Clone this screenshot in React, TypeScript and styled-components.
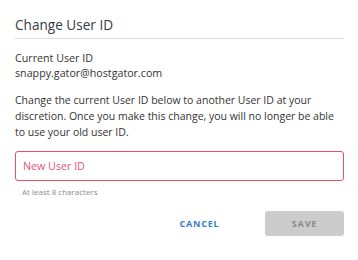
import React from "react";
import styled, { createGlobalStyle } from "styled-components";

const Global = createGlobalStyle`
  html, body { margin: 0; padding: 0; background: #ffffff; }
  body { font-family: "Open Sans", "Liberation Sans", sans-serif; color: #333333; }
  * { box-sizing: border-box; }
`;

const Dialog = styled.div`
  width: 358px;
  height: 260px;
  background: #ffffff;
  padding: 15px 14px 0 15px;
  display: flex;
  flex-direction: column;
`;

const Header = styled.div`
  padding-bottom: 3px;
  border-bottom: 1px solid #dddddd;
`;

const Title = styled.h2`
  margin: 0;
  font-size: 13.6px;
  line-height: 20px;
  font-weight: 400;
  color: #333a44;
`;

const Body = styled.div`
  padding-top: 12px;
  display: flex;
  flex-direction: column;
`;

const InfoLine = styled.div`
  font-size: 10.7px;
  line-height: 15px;
  color: #333333;
`;

const Paragraph = styled.p`
  margin: 11px 0 0 0;
  font-size: 10.5px;
  line-height: 16px;
  color: #333333;
`;

const Input = styled.input`
  margin-top: 11px;
  width: 100%;
  height: 30px;
  border: 1px solid #e8505b;
  border-radius: 3px;
  padding: 0 7px;
  font-family: "Open Sans", "Liberation Sans", sans-serif;
  font-size: 10.7px;
  color: #333333;
  outline: none;
  &::placeholder { color: #e2547a; opacity: 1; }
`;

const Helper = styled.div`
  margin-top: 5px;
  padding-left: 7px;
  font-size: 8px;
  line-height: 12px;
  color: #8a8a8a;
`;

const Actions = styled.div`
  margin-top: 13px;
  display: flex;
  justify-content: flex-end;
  align-items: center;
  gap: 26px;
`;

const Button = styled.button<{ $variant: "text" | "filled" }>`
  width: 79px;
  height: 25px;
  border: none;
  border-radius: 3px;
  font-family: "Open Sans", "Liberation Sans", sans-serif;
  font-size: 9px;
  font-weight: 700;
  letter-spacing: 0.8px;
  cursor: pointer;
  background: ${(p) => (p.$variant === "filled" ? "#cccccc" : "transparent")};
  color: ${(p) => (p.$variant === "filled" ? "#8a8a8a" : "#2f7dd0")};
`;

export default function App() {
  return (
    <>
      <Global />
      <Dialog>
        <Header>
          <Title>Change User ID</Title>
        </Header>
        <Body>
          <InfoLine>Current User ID</InfoLine>
          <InfoLine>snappy.gator@hostgator.com</InfoLine>
          <Paragraph>
            Change the current User ID below to another User ID at your
            discretion. Once you make this change, you will no longer be able
            to use your old user ID.
          </Paragraph>
          <Input placeholder="New User ID" />
          <Helper>At least 8 characters</Helper>
          <Actions>
            <Button $variant="text">CANCEL</Button>
            <Button $variant="filled" disabled>SAVE</Button>
          </Actions>
        </Body>
      </Dialog>
    </>
  );
}
